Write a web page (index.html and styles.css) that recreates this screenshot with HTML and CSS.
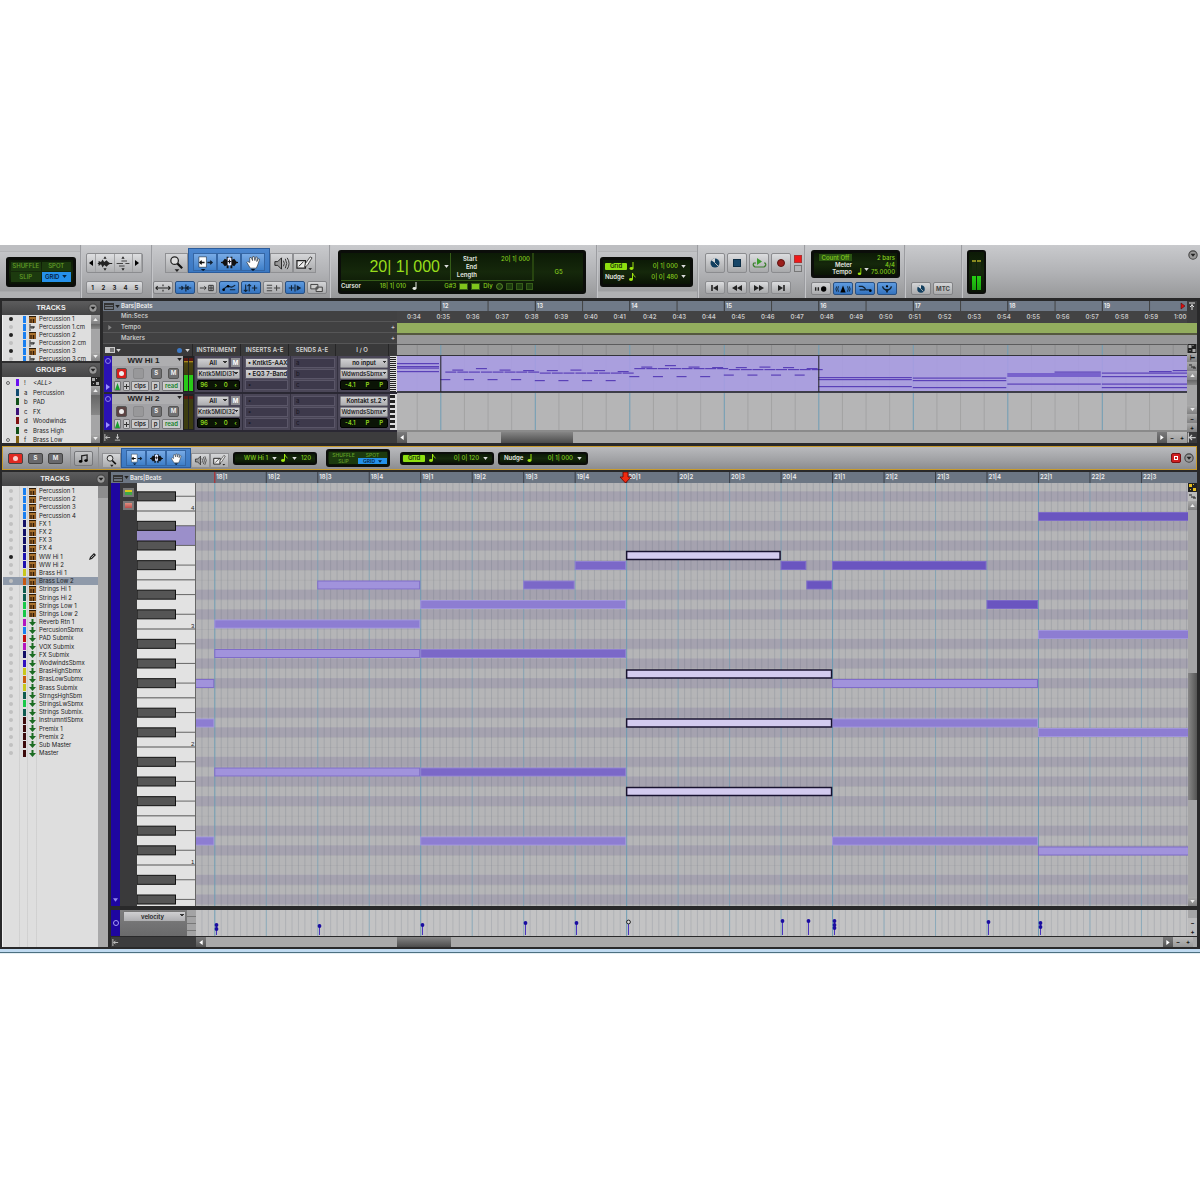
FILE: index.html
```
<!DOCTYPE html>
<html lang="en">
<head>
<meta charset="utf-8">
<title>Edit Window</title>
<link rel="stylesheet" href="styles.css">
</head>
<body>
<svg class="defs" aria-hidden="true">
  <symbol id="caret" viewBox="0 0 6 4"><path d="M0 0h6L3 4z"/></symbol>
  <symbol id="left" viewBox="0 0 4 6"><path d="M4 0v6L0 3z"/></symbol>
  <symbol id="right" viewBox="0 0 4 6"><path d="M0 0v6l4-3z"/></symbol>
  <symbol id="up" viewBox="0 0 6 4"><path d="M0 4h6L3 0z"/></symbol>
  <symbol id="zoom" viewBox="0 0 20 18"><circle cx="8" cy="6" r="4" fill="#ddd" stroke="#222" stroke-width="1.3"/><path d="M11 9l5 5" stroke="#111" stroke-width="2.4"/><path d="M8 15h5l-2.500 3z" fill="#222"/></symbol>
  <symbol id="trim" viewBox="0 0 20 18"><path d="M3 3h8v11H3z" fill="#fff" stroke="#123" stroke-width=".6"/><path d="M4 9h5M6 7L4 9l2 2" fill="none" stroke="#111" stroke-width="1.4"/><path d="M12 9h5M15 7l2 2-2 2" fill="none" stroke="#123" stroke-width="1.4"/><path d="M5 16h5l-2.500 2z" fill="#012"/></symbol>
  <symbol id="selector" viewBox="0 0 20 18"><path d="M1 9h18" stroke="#111" stroke-width="1.300"/><path d="M2 9l3-4 2 1V3h2v12H7v-3l-2 1zM18 9l-3-4-2 1V3h-2v12h2v-3l2 1z" fill="#111"/><path d="M8 4h4v8H8z" fill="#eef"/><path d="M8 8h4M10 6v4" stroke="#111"/></symbol>
  <symbol id="hand" viewBox="0 0 20 18"><path d="M6 14L3 9l1-1 2 1V4l1.500-.5L9 7V3l1.500-.5L11.500 7l1-4 1.500.5L13.500 8l1.500-3 1.500.5-2 6L13 15H7z" fill="#fff" stroke="#333" stroke-width=".7"/><path d="M7 16h5l-2.500 2z" fill="#012"/></symbol>
  <symbol id="speaker" viewBox="0 0 20 18"><path d="M3 7h3l4-4v12l-4-4H3z" fill="#999" stroke="#222"/><path d="M12 6q2 3 0 6M14 4q3 5 0 10M16 3q4 6 0 12" fill="none" stroke="#333"/></symbol>
  <symbol id="pencil" viewBox="0 0 20 18"><path d="M2 6h9v8H2z" fill="#eee" stroke="#222" stroke-width="1.300"/><path d="M4 12l5-5" stroke="#222"/><path d="M10 13l1-4 5-7 2 1-5 8z" fill="#eee" stroke="#222" stroke-width=".8"/><path d="M14 14h4l-2 2z" fill="#222"/></symbol>
  <symbol id="wave" viewBox="0 0 20 18"><path d="M1 9h18" stroke="#222" stroke-width="1.300"/><path d="M2 6l3 1 2-3 2 3 3-2 2 2 3 2-3 2-2 2-3-2-2 3-2-4-3 2z" fill="#222"/><path d="M8 3h4l-2-3zM8 15h4l-2 3z" fill="#222"/></symbol>
  <symbol id="midi" viewBox="0 0 20 18"><path d="M2 9h8M8 6h7M5 12h7M13 9h5" stroke="#444" stroke-width="1.300"/><path d="M8 3h4l-2-3zM8 15h4l-2 3z" fill="#222"/></symbol>
  <symbol id="spread" viewBox="0 0 18 10"><path d="M1 5h16M3 3L1 5l2 2M15 3l2 2-2 2M9 1v2M9 7v2" fill="none" stroke="#222" stroke-width="1.200"/></symbol>
  <symbol id="tabto" viewBox="0 0 18 10"><path d="M2 5h5M5 3l2 2-2 2M10 1v8M8 5h8M12 3v4M11 5l2-2M11 5l2 2" fill="none" stroke="#123" stroke-width="1.300"/></symbol>
  <symbol id="mirror" viewBox="0 0 18 10"><path d="M1 5h7M6 3l2 2-2 2M11 2h5v6h-5zM11 5h5M13.500 2v6" fill="none" stroke="#333" stroke-width="1.100"/></symbol>
  <symbol id="auto" viewBox="0 0 18 10"><path d="M2 7l5-4 5 1 4-2M10 7h6" fill="none" stroke="#123" stroke-width="1.200"/><circle cx="3" cy="7" r="1.500"/><circle cx="8" cy="3" r="1.500"/></symbol>
  <symbol id="updown" viewBox="0 0 18 10"><path d="M3 1v8M1 7l2 2 2-2M7 9V1M5 3l2-2 2 2M13 2v6M10 5h6" fill="none" stroke="#123" stroke-width="1.200"/></symbol>
  <symbol id="layers" viewBox="0 0 18 10"><path d="M2 2h6M2 5h6M2 8h6M10 5h7M13 2v6" stroke="#444" stroke-width="1.200"/></symbol>
  <symbol id="insert" viewBox="0 0 18 10"><path d="M2 5h6M5 2v6M9 1v8" stroke="#123" stroke-width="1.200"/><path d="M11 2v6l5-3z" fill="#123"/></symbol>
  <symbol id="windows" viewBox="0 0 18 10"><path d="M2 1h8v5H2zM8 4h7v5H8z" fill="#ccc" stroke="#333"/></symbol>
  <symbol id="clock" viewBox="0 0 12 12"><circle cx="6" cy="6" r="4.500" fill="#123f5f"/><path d="M6 6V1L2 3z" fill="#d8d8d8"/><path d="M6 6l3 3" stroke="#bbb"/></symbol>
  <symbol id="loop" viewBox="0 0 16 12"><path d="M5 6H3q-2 2 1 4h9q3-2 1-4h-1" fill="none" stroke="#3a7d2c" stroke-width="1.200"/><path d="M6 1v7l5-3.500z" fill="#3a9d2c"/></symbol>
  <symbol id="rtz" viewBox="0 0 12 8"><path d="M3 1v6" stroke="#222" stroke-width="1.600"/><path d="M9 1v6L4 4z"/></symbol>
  <symbol id="rew" viewBox="0 0 12 8"><path d="M6 1v6L1 4zM11 1v6L6 4z"/></symbol>
  <symbol id="ffw" viewBox="0 0 12 8"><path d="M1 1v6l5-3zM6 1v6l5-3z"/></symbol>
  <symbol id="end" viewBox="0 0 12 8"><path d="M9 1v6" stroke="#222" stroke-width="1.600"/><path d="M3 1v6l5-3z"/></symbol>
  <symbol id="wait" viewBox="0 0 18 10"><path d="M3 3v4M6 3v4" stroke="#222" stroke-width="1.600"/><circle cx="12" cy="5" r="3"/></symbol>
  <symbol id="click" viewBox="0 0 18 10"><path d="M9 1l3 8H6z"/><path d="M4 2q-2 3 0 6M2 2q-2 3 0 6M14 2q2 3 0 6M16 2q2 3 0 6" fill="none" stroke="#123"/></symbol>
  <symbol id="merge" viewBox="0 0 18 10"><path d="M2 2h4q3 1 4 4h6M3 6h6" fill="none" stroke="#123" stroke-width="1.400"/><circle cx="15" cy="7" r="1.500"/></symbol>
  <symbol id="tempo" viewBox="0 0 18 10"><path d="M4 2q1 4 5 4t5-4M9 6v3" fill="none" stroke="#123" stroke-width="1.600"/><path d="M6 5h6l-3 4z" fill="#123"/><circle cx="9" cy="2" r="1.300"/></symbol>
  <symbol id="qnote" viewBox="0 0 5 8"><path d="M4 0v6" stroke="currentColor"/><ellipse cx="2.500" cy="6.500" rx="2" ry="1.400" fill="currentColor"/></symbol>
  <symbol id="enote" viewBox="0 0 7 8"><path d="M3.500 6V0q0 2 3 4" fill="none" stroke="currentColor"/><ellipse cx="2" cy="6.500" rx="2" ry="1.400" fill="currentColor"/></symbol>
  <symbol id="notes" viewBox="0 0 12 10"><path d="M4 8V2l6-1v6" fill="none" stroke="#222" stroke-width="1.400"/><ellipse cx="2.800" cy="8.300" rx="2" ry="1.500"/><ellipse cx="8.800" cy="7.300" rx="2" ry="1.500"/></symbol>
  <symbol id="round" viewBox="0 0 12 12"><circle cx="6" cy="6" r="5" fill="#999" stroke="#444" stroke-width="1.300"/><path d="M3 4.500h6L6 8z" fill="#222"/></symbol>
  <symbol id="grid4" viewBox="0 0 9 9"><path d="M0 0h9v9H0z" fill="#222"/><path d="M1 1h3v3H1zM5 5h3v3H5zM5 1h1v1H5zM2 6h1v1H2z" fill="currentColor"/></symbol>
  <symbol id="window" viewBox="0 0 10 8"><path d="M0 1h10v7H0z" fill="#333"/><path d="M1 3h8v1H1zM1 5h8v2H1z" fill="#6b727c"/></symbol>
  <symbol id="zoomv" viewBox="0 0 9 9"><path d="M1 3h3M3 5h4M5 6h3" stroke="#222"/></symbol>
  <symbol id="expand" viewBox="0 0 8 8"><path d="M1 0v8M2 4h5M4 2L2 4l2 2" fill="none" stroke="#ccc"/></symbol>
  <symbol id="drop" viewBox="0 0 8 8"><path d="M1 7h6M4 0v4" stroke="#ccc"/><path d="M2 3h4L4 6z" fill="#ccc"/></symbol>
</svg>

<main class="app">
  <header class="toolbar">
    <section class="group modes">
      <div class="lcd mode-grid">
        <button>SHUFFLE</button><button>SPOT</button><button>SLIP</button>
        <button class="on">GRID<svg class="c"><use href="#caret"/></svg></button>
      </div>
    </section>
    <section class="group presets">
      <div class="seg tall">
        <button aria-label="Zoom out"><svg class="arrow"><use href="#left"/></svg></button><button aria-label="Audio zoom"><svg><use href="#wave"/></svg></button><button aria-label="MIDI zoom"><svg><use href="#midi"/></svg></button><button aria-label="Zoom in"><svg class="arrow"><use href="#right"/></svg></button>
      </div>
      <div class="seg nums"><button>1</button><button>2</button><button>3</button><button>4</button><button>5</button></div>
    </section>
    <section class="group tools">
      <div class="toolrow">
        <button aria-label="Zoomer"><svg><use href="#zoom"/></svg></button>
        <div class="smart"><button aria-label="Trim"><svg><use href="#trim"/></svg></button><button aria-label="Selector"><svg><use href="#selector"/></svg></button><button aria-label="Grabber"><svg><use href="#hand"/></svg></button></div>
        <button aria-label="Scrubber"><svg><use href="#speaker"/></svg></button>
        <button aria-label="Pencil"><svg><use href="#pencil"/></svg></button>
      </div>
      <div class="minis">
        <button aria-label="Zoom toggle"><svg><use href="#spread"/></svg></button><button class="blue" aria-label="Tab to transient"><svg><use href="#tabto"/></svg></button><button aria-label="Mirrored editing"><svg><use href="#mirror"/></svg></button><button class="blue" aria-label="Automation follows edit"><svg><use href="#auto"/></svg></button><button class="blue" aria-label="Link timeline"><svg><use href="#updown"/></svg></button><button aria-label="Link track"><svg><use href="#layers"/></svg></button><button class="blue" aria-label="Insertion follows playback"><svg><use href="#insert"/></svg></button><button aria-label="Layered editing"><svg><use href="#windows"/></svg></button>
      </div>
    </section>
    <section class="group counter">
      <div class="lcd main-lcd">
        <div class="pos"><span class="big">20| 1| 000</span><svg class="c"><use href="#caret"/></svg></div>
        <dl class="range"><dt>Start</dt><dd>20| 1| 000</dd><dt>End</dt><dd></dd><dt>Length</dt><dd></dd></dl>
        <div class="pitch">G5</div>
        <div class="cursor"><b>Cursor</b><span>18| 1| 010</span><svg class="qn"><use href="#qnote"/></svg><span class="gs">G#3</span><i class="chip on"></i><i class="chip on"></i><span>Dly</span><i class="chip ring2"></i><i class="chip"></i><i class="chip"></i><i class="chip"></i></div>
      </div>
    </section>
    <section class="group modes">
      <div class="lcd gn">
        <button class="lit">Grid</button><svg class="qn"><use href="#qnote"/></svg><span>0| 1| 000</span><svg class="c"><use href="#caret"/></svg>
        <b>Nudge</b><svg class="en"><use href="#enote"/></svg><span>0| 0| 480</span><svg class="c"><use href="#caret"/></svg>
      </div>
    </section>
    <section class="group transport">
      <div class="trow big-row">
        <button aria-label="Online"><svg><use href="#clock"/></svg></button><button aria-label="Stop"><i class="stop"></i></button><button aria-label="Play"><svg class="loop"><use href="#loop"/></svg></button><button aria-label="Record"><i class="rec"></i></button>
        <div class="leds"><i class="led red"></i><i class="led"></i></div>
      </div>
      <div class="trow">
        <button aria-label="Return to zero"><svg><use href="#rtz"/></svg></button><button aria-label="Rewind"><svg><use href="#rew"/></svg></button><button aria-label="Fast forward"><svg><use href="#ffw"/></svg></button><button aria-label="Go to end"><svg><use href="#end"/></svg></button>
      </div>
    </section>
    <section class="group tempo">
      <div class="lcd tempo-lcd">
        <span class="boxed">Count Off</span><span>2 bars</span>
        <b>Meter</b><span>4/4</span>
        <b>Tempo</b><span><svg class="qn"><use href="#qnote"/></svg><svg class="c"><use href="#caret"/></svg>75.0000</span>
      </div>
      <div class="minis">
        <button aria-label="Wait for note"><svg><use href="#wait"/></svg></button><button class="blue" aria-label="Metronome"><svg><use href="#click"/></svg></button><button class="blue" aria-label="MIDI merge"><svg><use href="#merge"/></svg></button><button class="blue" aria-label="Conductor"><svg><use href="#tempo"/></svg></button>
      </div>
    </section>
    <section class="group sync"><div class="minis"><button aria-label="Sync"><svg><use href="#clock"/></svg></button><button>MTC</button></div></section>
    <section class="group master">
      <div class="lcd vu"><i></i><i></i></div>
      <button class="menu" aria-label="Menu"><svg><use href="#round"/></svg></button>
    </section>
  </header>

  <section class="edit">
    <aside class="side">
      <h2>TRACKS<svg><use href="#round"/></svg></h2>
      <div class="listbox top-list"><ul class="tracks" id="shown"></ul><div class="vbar"><button aria-label="Scroll up"><svg><use href="#up"/></svg></button><i></i><span></span><button aria-label="Scroll down"><svg><use href="#caret"/></svg></button></div></div>
      <h2 class="second">GROUPS<svg><use href="#round"/></svg></h2>
      <div class="listbox group-list"><ul class="groups" id="groups"></ul><div class="vbar"><svg class="g4"><use href="#grid4"/></svg><button aria-label="Scroll up"><svg><use href="#up"/></svg></button><i class="long"></i><span></span><button aria-label="Scroll down"><svg><use href="#caret"/></svg></button></div></div>
    </aside>
    <div class="arrange">
      <div class="ruler-names">
        <div class="bars"><svg class="win"><use href="#window"/></svg><svg class="c"><use href="#caret"/></svg>Bars|Beats</div>
        <div>Min:Secs</div><div><svg class="tri"><use href="#right"/></svg>Tempo<em>+</em></div><div>Markers<em>+</em></div>
      </div>
      <svg class="rulers" id="rulers"></svg>
      <div class="heads">
        <div class="cols"><span class="pick"><i></i><svg class="c"><use href="#caret"/></svg><b></b><svg class="c"><use href="#caret"/></svg></span><span>INSTRUMENT</span><span>INSERTS A-E</span><span>SENDS A-E</span><span>I / O</span></div>
        <div id="heads"></div>
      </div>
      <svg class="lanes" id="lanes"></svg>
      <div class="vbar zoomer"><svg class="g4"><use href="#grid4"/></svg><button>⊢</button><button aria-label="Note zoom"><svg class="g4"><use href="#zoomv"/></svg></button><button aria-label="Scroll up"><svg><use href="#up"/></svg></button><i></i><span></span><button aria-label="Scroll down"><svg><use href="#caret"/></svg></button><button>−</button><button>+</button></div>
      <div class="foot"><svg><use href="#expand"/></svg><svg><use href="#drop"/></svg></div>
      <div class="hbar"><button aria-label="Scroll left"><svg><use href="#left"/></svg></button><span class="pre"></span><i></i><span></span><button aria-label="Scroll right"><svg><use href="#right"/></svg></button><button class="lt">−</button><button class="lt">+</button><svg class="last"><use href="#expand"/></svg></div>
    </div>
  </section>

  <section class="midi">
    <header class="midibar">
      <div class="rsm"><button class="r" aria-label="Record"><i></i></button><button>S</button><button>M</button></div>
      <div class="noteb"><button aria-label="Notation"><svg><use href="#notes"/></svg></button></div>
      <div class="toolrow small">
        <button aria-label="Zoomer"><svg><use href="#zoom"/></svg></button>
        <div class="smart"><button aria-label="Trim"><svg><use href="#trim"/></svg></button><button aria-label="Selector"><svg><use href="#selector"/></svg></button><button aria-label="Grabber"><svg><use href="#hand"/></svg></button></div>
        <button aria-label="Scrubber"><svg><use href="#speaker"/></svg></button>
        <button aria-label="Pencil"><svg><use href="#pencil"/></svg></button>
      </div>
      <div class="lcd line w83"><span>WW Hi 1</span><svg class="c"><use href="#caret"/></svg><svg class="en"><use href="#enote"/></svg><svg class="c"><use href="#caret"/></svg><span>120</span></div>
      <div class="lcd mode-grid small"><button>SHUFFLE</button><button>SPOT</button><button>SLIP</button><button class="on">GRID<svg class="c"><use href="#caret"/></svg></button></div>
      <div class="lcd line w93"><button class="lit">Grid</button><svg class="en"><use href="#enote"/></svg><span class="grow">0| 0| 120</span><svg class="c"><use href="#caret"/></svg></div>
      <div class="lcd line w90"><b>Nudge</b><svg class="qn"><use href="#qnote"/></svg><span class="grow">0| 1| 000</span><svg class="c"><use href="#caret"/></svg></div>
      <div class="ends"><button class="target" aria-label="Link"><i></i></button><button class="menu" aria-label="Menu"><svg><use href="#round"/></svg></button></div>
    </header>
    <div class="editor">
      <aside class="side">
        <h2>TRACKS<svg><use href="#round"/></svg></h2>
        <div class="listbox full"><ul class="tracks" id="all"></ul><div class="vbar plain"></div></div>
      </aside>
      <div class="roll">
        <div class="roll-name"><svg class="win"><use href="#window"/></svg><svg class="c"><use href="#caret"/></svg>Bars|Beats</div>
        <svg class="beats" id="beats"></svg>
        <div class="strip"><svg><use href="#caret"/></svg></div>
        <div class="chips"><i class="a"></i><i class="b"></i></div>
        <svg class="keys" id="keys"></svg>
        <svg class="notes" id="notesview"></svg>
        <div class="vbar rollbar"><svg class="g4 gold"><use href="#grid4"/></svg><button class="lt" aria-label="Note zoom"><svg class="g4"><use href="#zoomv"/></svg></button><button aria-label="Scroll up"><svg><use href="#up"/></svg></button><span class="pre"></span><i></i><span></span><button aria-label="Scroll down"><svg><use href="#caret"/></svg></button></div>
        <div class="strip vel"><i></i></div>
        <div class="velname"><select aria-label="Lane"><option>velocity</option></select></div>
        <div class="ticks"></div>
        <svg class="velocity" id="velocity"></svg>
        <div class="vbar velbar"><span></span><button>−</button><button>+</button></div>
        <div class="foot"><svg><use href="#expand"/></svg></div>
        <div class="hbar"><button aria-label="Scroll left"><svg><use href="#left"/></svg></button><span class="pre"></span><i></i><span></span><button aria-label="Scroll right"><svg><use href="#right"/></svg></button><button class="lt">−</button><button class="lt">+</button></div>
      </div>
    </div>
  </section>
  <div class="frame"></div>
</main>
<script src="app.js"></script>
</body>
</html>
```
FILE: styles.css
```
* { box-sizing: border-box; }
body { margin: 0; background: #fff; font: 6px/8px Inter, "Liberation Sans", sans-serif; color: #222; }
button, select { font: inherit; color: inherit; border: 0; padding: 0; margin: 0; background: none; }
button { display: flex; align-items: center; justify-content: center; }
ul, dl, dd, h2 { margin: 0; padding: 0; list-style: none; }
svg { display: block; flex: none; }
.defs { position: absolute; width: 0; height: 0; }
.app { padding: 245px 0; overflow: hidden; }
.c { width: 5px; height: 3px; fill: currentColor; }
.qn { width: 5px; height: 8px; }
.en { width: 7px; height: 8px; }

/* main toolbar */
.toolbar { display: grid; grid-template-columns: 81px 71px 178px 267px 101px 107px 100px 57px 1fr; height: 53px; background: linear-gradient(#c9cacd, #b2b3b6 50%, #97989a); }
.group { border-left: 1px solid #c4c5c8; border-right: 1px solid #9b9ca0; }
.group:first-child { border-left: 0; padding-left: 6px; }
.lcd { background: linear-gradient(#0c1a06, #15280b 50%, #0a1405); border: 3px solid #0b0d0a; border-radius: 3px; color: #86cf1e; font-weight: 500; }
.lcd b { color: #e4e8e0; font-weight: 600; }
.lcd .c { color: #ddd; }
.lcd .qn, .lcd .en { color: #9ee60f; }
.modes { padding: 6px 3px 6px 5px; background: linear-gradient(#bdbec1 6px, #a2a3a5 6px, transparent 7px, transparent 46px, #a0a1a3 46px, #b0b1b3 47px); display: flex; align-items: center; }
.mode-grid { display: grid; grid-template-columns: 1fr 1fr; gap: 1px; width: 70px; height: 30px; padding: 2px; }
.mode-grid button { background: #1c3a0e; color: #64a028; gap: 3px; }
.mode-grid .on { background: #2591ea; color: #06233f; font-weight: 600; }
.mode-grid .on .c { color: #06233f; }
.presets { padding: 8px 7px 4px 4px; display: flex; flex-direction: column; justify-content: space-between; }
.seg { display: flex; width: 57px; height: 13px; border: 1px solid #8b8c8f; border-radius: 2px; background: linear-gradient(#dedfe1, #aeafb1); }
.seg button { flex: 1; font-weight: 700; }
.seg.tall { height: 20px; }
.seg.tall button { flex: 0 0 9px; border-right: 1px solid #a2a3a5; }
.seg.tall button:nth-child(2), .seg.tall button:nth-child(3) { flex: 1; }
.seg svg { width: 16px; height: 15px; }
.seg .arrow { width: 4px; height: 6px; }
.tools { padding: 3px 0 4px; display: flex; flex-direction: column; justify-content: space-between; }
.toolrow { display: flex; align-items: flex-end; height: 25px; padding-left: 12px; }
.toolrow button { width: 23px; height: 20px; background: linear-gradient(#d6d7d9, #a9aaac); border: 1px solid #8f9093; }
.toolrow svg { width: 19px; height: 17px; }
.smart { display: flex; align-items: flex-end; height: 25px; padding: 0 4px 1px; background: linear-gradient(#4b86cf, #3a78c2); border: 1px solid #2b5c9c; }
.toolrow .smart button { width: 24px; height: 18px; background: linear-gradient(#79abe6, #3e7fc9); border: 1px solid #3566a4; }
.minis { display: flex; gap: 2px; }
.minis button { width: 20px; height: 13px; border: 1px solid #828386; border-radius: 2px; background: linear-gradient(#d4d5d7, #aaabad); color: #444; font-weight: 700; }
.minis .blue { background: linear-gradient(#5e9be0, #3473bf); border-color: #274f82; }
.minis svg { width: 16px; height: 10px; }
.counter { padding: 5px 10px 4px 7px; }
.main-lcd { display: grid; grid-template-columns: 110px 83px 1fr; grid-template-rows: 1fr 11px; height: 44px; white-space: nowrap; }
.pos { display: flex; align-items: center; justify-content: flex-end; gap: 4px; padding: 0 1px; border-right: 1px solid #355c18; }
.big { font: 16px/24px "Liberation Sans", sans-serif; color: #98de1b; }
.range { display: grid; grid-template-columns: 24px 1fr; align-content: center; padding: 0 2px; text-align: right; border-right: 2px solid #27440f; }
.range dt { color: #e4e8e0; font-weight: 600; }
.pitch { grid-row: 1 / 3; grid-column: 3; display: grid; place-items: center; }
.cursor { grid-column: 1 / 3; grid-row: 2; display: flex; align-items: center; gap: 3px; border-top: 1px solid #355c18; }
.cursor span:nth-of-type(1) { margin-left: 16px; }
.cursor .qn { color: #e4e8e0; margin-left: 3px; }
.gs { margin-left: 24px; }
.chip { width: 7px; height: 7px; flex: none; border: 1px solid #355c18; background: #1c3a0e; }
.chip.on { background: #7fc61c; width: 9px; }
.chip.ring2 { border-radius: 50%; border-color: #5a8a2a; }
.gn { display: grid; grid-template-columns: 24px 8px 1fr 7px; align-items: center; row-gap: 1px; width: 93px; height: 30px; padding: 2px; margin-left: -3px; }
.gn span { text-align: right; padding-right: 3px; }
.lit { background: #8ee010; color: #17300a; border-radius: 1px; width: 22px; height: 7px; font-weight: 600; }
.transport, .tempo { display: flex; flex-direction: column; justify-content: space-between; padding: 8px 0 4px 6px; }
.trow { display: flex; gap: 2px; }
.trow button { width: 20px; height: 13px; border: 1px solid #8b8c8f; border-radius: 2px; background: linear-gradient(#dcdddf, #a8a9ab); }
.trow svg { width: 12px; height: 8px; fill: #222; }
.big-row button { height: 20px; }
.big-row svg { width: 12px; height: 12px; }
.big-row .loop { width: 16px; }
.stop { width: 8px; height: 8px; background: #174668; border: 1px solid #0c2d45; }
.rec { width: 8px; height: 8px; border-radius: 50%; background: #9c1f1c; border: 1px solid #5e1512; }
.leds { display: grid; gap: 2px; align-content: center; margin-left: 1px; }
.led { width: 8px; height: 7px; border: 1px solid #777; background: #b4b5b7; }
.led.red { background: #f01818; height: 8px; border-color: #a33; }
.tempo { padding: 5px 4px 3px 5px; }
.tempo-lcd { display: grid; grid-template-columns: 36px 1fr; width: 89px; height: 28px; padding: 0 2px; line-height: 7px; text-align: right; align-content: center; }
.tempo-lcd span { display: flex; justify-content: flex-end; gap: 2px; }
.tempo-lcd .qn { height: 7px; }
.tempo-lcd .boxed { background: #2a5413; justify-content: center; margin-left: 3px; }
.sync { display: flex; align-items: flex-end; padding: 0 5px 3px; }
.master { display: flex; justify-content: space-between; border-right: 0; padding: 5px 2px 3px 4px; }
.vu { width: 19px; height: 44px; display: flex; gap: 1px; align-items: flex-end; justify-content: center; padding: 2px; border-width: 2px; }
.vu i { width: 4px; height: 30px; background: linear-gradient(#8a8a20 2px, #1b2b10 2px, #16240e 16px, #23d012 16px, #1aa00f); }
.menu { width: 10px; height: 10px; }
.menu svg { width: 10px; height: 10px; }

/* side lists */
.side { display: flex; flex-direction: column; background: #2d2d2e; min-width: 0; }
.side h2 { height: 14px; flex: none; font: 700 7px/14px "Liberation Sans", sans-serif; color: #eee; text-align: center; background: linear-gradient(#5c5c5d, #454546); position: relative; }
.side h2 svg { position: absolute; right: 2px; top: 2px; width: 10px; height: 10px; }
.side .second { margin-top: 2px; }
.listbox { display: flex; overflow: hidden; background: #dedede; border-left: 1px solid #f2f2f2; }
.listbox ul { flex: 1; min-width: 0; overflow: hidden; }
.tracks li { display: grid; grid-template-columns: 16px 10px 10px 1fr; align-items: center; height: 8px; white-space: nowrap; }
.dot { width: 4px; height: 4px; border-radius: 50%; background: #c0c0c0; margin-left: 6px; }
.dot.on { background: #222; }
.tag { width: 3px; height: 7px; margin-left: 4px; }
.kind { width: 7px; height: 7px; }
.top-list { height: 46px; }
.group-list { height: 66px; }
.groups li { display: grid; grid-template-columns: 13px 8px 9px 1fr; height: 9px; line-height: 9px; align-items: center; white-space: nowrap; }
.groups { padding-top: 1px; }
.groups li:nth-child(2n) { height: 10px; }
.groups .tag { margin-left: 0; }
.ring { width: 4px; height: 4px; border: 1px solid #666; border-radius: 50%; margin-left: 3px; }
.ring.off { visibility: hidden; }
.full { flex: 1; }
.full ul { padding-top: 1px; background: linear-gradient(90deg, transparent 16px, #cfcfcf 16px, #d2d2d2 17px, transparent 17px, transparent 24px, #cfcfcf 24px, #d2d2d2 25px, transparent 25px, transparent 33px, #cfcfcf 33px, #d2d2d2 34px, transparent 34px); }
.full .stack { display: flex; flex-direction: column; height: 270px; }
.full li { flex: 1; height: auto; }
.full li.sel { background: #8f9aaa; }
.full .pen { display: flex; justify-content: space-between; align-items: center; padding-right: 2px; }
.pen svg { width: 8px; height: 8px; }

/* scrollbars */
.vbar { display: flex; flex-direction: column; width: 9px; background: #a5a5a6; flex: none; }
.vbar button, .vbar .g4 { width: 100%; height: 9px; }
.vbar button { background: linear-gradient(#aaa, #808081); color: #111; font-weight: 700; }
.vbar button svg { width: 5px; height: 3px; fill: #eee; }
.vbar button .g4 { width: 9px; height: 9px; }
.vbar .g4 { color: #aaa; }
.vbar span { flex: 1; }
.vbar i { height: 5px; background: linear-gradient(#666, #888); }
.vbar .long { height: 20px; }
.vbar.plain { width: 10px; background: linear-gradient(#8d8d8e 12px, #a9a9aa 12px); }
.hbar { display: flex; height: 10px; background: #a9a9a9; align-items: stretch; }
.hbar button { width: 10px; background: linear-gradient(#7a7a7b, #555); color: #111; font-weight: 700; }
.hbar button svg { width: 4px; height: 5px; fill: #fff; }
.hbar .lt { background: linear-gradient(#bbb, #999); }
.hbar span { flex: 1; }
.hbar i { background: linear-gradient(#858585, #4c4c4c); }
.hbar .last { width: 10px; height: 11px; background: #3b3b3c; }
.foot { display: flex; gap: 3px; align-items: center; background: #3c3c3d; padding-left: 1px; }
.foot svg { width: 7px; height: 7px; }

/* edit window */
.edit { display: grid; grid-template-columns: 98px 1fr; gap: 3px; padding: 3px 3px 3px 2px; background: #29292a; }
.arrange { display: grid; grid-template-columns: 294px 1fr 10px; grid-template-rows: 43px 88px 11px; min-width: 0; background: #3c3c3d; }
.ruler-names { display: grid; grid-template-rows: 10px 11px 11px 11px; color: #c8c8c8; font-weight: 600; }
.ruler-names div { display: flex; align-items: center; padding-left: 18px; background: #414142; border-bottom: 1px solid #565657; }
.ruler-names .bars { background: #707a88; color: #eee; padding-left: 1px; gap: 1px; border-bottom: 0; }
.ruler-names .c, .roll-name .c { fill: #222; }
.win { width: 10px; height: 8px; }
.ruler-names em { margin-left: auto; padding-right: 2px; font-style: normal; }
.tri { width: 4px; height: 5px; fill: #888; margin: 0 9px 0 -13px; }
.rulers { width: 100%; height: 43px; grid-column: 2 / 4; }
.lanes { width: 100%; height: 88px; }
.arrange .foot { grid-column: 1; }
.arrange .hbar { grid-column: 2 / 4; height: 11px; }
.arrange .hbar .pre { flex: 0 0 94px; }
.arrange .hbar i { width: 72px; }
.zoomer { width: 10px; }
.zoomer .g4 { flex: none; }
.heads { display: grid; grid-template-rows: 12px 76px; }
.cols { display: grid; grid-template-columns: 90px 48px 48px 47px 53px; background: #3a3a3b; color: #d4d4d4; font-weight: 600; line-height: 12px; text-align: center; }
.cols span { border-right: 1px solid #262627; white-space: nowrap; }
.pick { display: flex; align-items: center; gap: 1px; padding: 0 2px; }
.pick i { width: 10px; height: 6px; border: 1px solid #ccc; border-left-width: 5px; background: #777; }
.pick b { width: 5px; height: 5px; border-radius: 50%; background: #3c78c4; margin: 0 2px 0 auto; }
.head { display: grid; grid-template-columns: 8px 71px 11px 48px 48px 47px 53px 1fr; height: 38px; background: #4a4657; margin-left: 1px; border-bottom: 2px solid #2a2833; }
.hue { background: #2a12b4; color: #9d90ff; display: flex; flex-direction: column; justify-content: space-between; align-items: center; padding: 2px 0; }
.hue svg { width: 4px; height: 6px; fill: currentColor; }
.hue i { width: 6px; height: 6px; border-radius: 50%; border: 1px solid #8c80e8; }
.name { background: #a2a2a5; display: grid; grid-template-rows: 10px 14px 12px; }
.name strong { font: 700 8px/10px "Liberation Sans", sans-serif; background: #aeaeb0; text-align: center; position: relative; padding-right: 8px; }
.name strong svg { position: absolute; right: 1px; top: 2px; }
.name div { display: flex; align-items: center; justify-content: space-between; padding: 0 4px; }
.name div:last-child { padding: 0 2px; }
.sq { width: 11px; height: 11px; border: 1px solid #555; border-radius: 2px; background: #707072; color: #eee; font-weight: 700; }
.sq i { width: 5px; height: 5px; border-radius: 50%; background: #eee; }
.sq.red { background: #d8201c; }
.sq.arm { background: #5c4444; }
.sq.blank { background: #98989a; border-color: #8a8a8c; }
.tiny { height: 10px; padding: 0 2px; background: #cacacc; border: 1px solid #77777a; border-radius: 1px; font-weight: 600; }
.tiny.ico { padding: 0 1px; width: 7px; }
.tiny svg { width: 5px; height: 7px; }
.tiny.green { color: #15822a; }
.mtr { background: #222; display: flex; gap: 1px; padding: 2px 1px 1px; }
.mtr i { flex: 1; background: linear-gradient(#5a1a14 3px, #3d3d10 3px); }
.hot .mtr i { background: linear-gradient(#5a1a14 3px, #c8a020 3px, #4c4410 5px, #3d3d10 17px, #28c818 17px); }
.slots { display: grid; grid-template-rows: 10px 10px 10px; gap: 1px; padding: 2px 2px 0; border-left: 1px solid #33303f; }
.slots > div { display: flex; gap: 2px; min-width: 0; }
.slots .box { flex: 1; min-width: 0; background: #3d394b; border: 1px solid #5a5668; color: #191722; padding-left: 2px; line-height: 8px; justify-content: flex-start; }
.slots .full-slot { background: linear-gradient(#d4d4d6, #b4b4b7); color: #111; font-weight: 600; white-space: nowrap; }
select { background: conic-gradient(from 315deg at 50% 100%, #333 90deg, transparent 0) right 1px top 2px / 4px 2px no-repeat, linear-gradient(#d0d0d2, #aeaeb1); appearance: none; }
.slots select { flex: 1; min-width: 0; width: 100%; height: 10px; border: 1px solid #85858a; border-radius: 1px; color: #111; font-weight: 600; text-align: center; line-height: 8px; }
.slots .port { font-weight: 500; padding-right: 4px; }
.slots .m { width: 9px; height: 9px; background: #8e8e92; color: #fff; font-weight: 700; }
.slots .num { flex: 1; display: flex; justify-content: space-around; align-items: center; background: #0b1406; color: #8fd61d; border: 1px solid #000; border-radius: 2px; font-weight: 600; }

/* MIDI editor */
.midi { background: #29292a; padding: 0 3px 2px 2px; }
.midibar { display: flex; align-items: center; height: 24px; border: 1px solid #c79a2c; background: linear-gradient(#b9babd, #a4a5a8 50%, #8c8d90); }
.rsm { display: flex; gap: 5px; padding: 0 7px 0 5px; align-self: stretch; align-items: center; border-right: 1px solid #8d8e90; }
.rsm button { width: 15px; height: 11px; border: 1px solid #444; border-radius: 2px; background: #69696c; color: #eee; font-weight: 700; }
.rsm .r { background: #e02a22; }
.rsm i { width: 5px; height: 5px; border-radius: 50%; background: #f8d0cc; }
.noteb { padding: 0 5px 0 3px; align-self: stretch; display: flex; align-items: center; border-right: 1px solid #8d8e90; }
.noteb button { width: 19px; height: 15px; border: 1px solid #77787b; border-radius: 2px; background: linear-gradient(#c6c7c9, #9c9d9f); }
.noteb svg { width: 11px; height: 9px; }
.small.toolrow { height: 20px; padding-left: 3px; margin-right: 4px; }
.small.toolrow button { width: 19px; height: 15px; }
.small .smart { height: 20px; }
.small.toolrow .smart button { width: 20px; height: 16px; }
.small svg { width: 15px; height: 13px; }
.line { display: flex; align-items: center; gap: 4px; height: 13px; border-width: 2px; padding: 0 4px; white-space: nowrap; }
.line span:first-child { margin-left: auto; }
.grow { flex: 1; text-align: right; }
.w83 { width: 84px; margin-right: 9px; }
.w93 { width: 94px; margin-right: 4px; padding-left: 1px; }
.w90 { width: 90px; }
.mode-grid.small { width: 64px; height: 18px; padding: 1px; gap: 0; border-width: 2px; line-height: 6px; margin-right: 10px; font-size: 5px; }
.mode-grid.small .c { width: 4px; height: 3px; }
.ends { margin-left: auto; display: flex; gap: 3px; padding-right: 2px; }
.target { width: 10px; height: 10px; background: #d01d20; border: 1px solid #7a1012; border-radius: 2px; }
.target i { width: 4px; height: 4px; border: 1px solid #fff; }
.editor { display: grid; grid-template-columns: 106px 1fr; gap: 3px; padding-top: 2px; }
.roll { display: grid; grid-template-columns: 9px 17px 50px 9px 1fr 9px; grid-template-rows: 11px 423px 4px 26px 1px 10px; min-width: 0; }
.roll-name { grid-area: 1 / 1 / 2 / 5; background: #6c7683; color: #eee; font-weight: 600; display: flex; align-items: center; gap: 1px; padding-left: 2px; }
.beats { grid-area: 1 / 5 / 2 / 7; width: 100%; height: 11px; z-index: 1; }
.strip { grid-area: 2 / 1; background: #1e06a0; display: flex; align-items: flex-end; justify-content: center; padding-bottom: 4px; }
.strip svg { width: 5px; height: 4px; fill: #9486f0; }
.chips { grid-area: 2 / 2; background: #3a3a3b; padding: 5px 3px; }
.chips i { display: block; width: 11px; height: 9px; border: 2px solid #777; margin-bottom: 4px; }
.chips .a { background: linear-gradient(#d8c71c 2px, #40a848 2px); }
.chips .b { background: linear-gradient(#e09080, #b84c4c); }
.keys { grid-area: 2 / 3 / 3 / 5; width: 59px; height: 423px; background: #e2e2e2; }
.notes { grid-area: 2 / 5; width: 100%; height: 423px; background: #b5b5b7; }
.rollbar { grid-area: 2 / 6; }
.rollbar .pre { flex: 0 0 163px; }
.rollbar i { height: 127px; background: linear-gradient(90deg, #888, #555); }
.vbar .gold { color: #e8c020; }
.vbar .lt { background: #bbb; }
.strip.vel { grid-area: 4 / 1; align-items: center; padding: 0; }
.vel i { width: 6px; height: 6px; border: 1px solid #a79df5; border-radius: 50%; }
.velname { grid-area: 4 / 2 / 5 / 4; background: linear-gradient(#7e7e7f, #6a6a6b); padding: 1px 3px; }
.velname select { width: 63px; height: 11px; border: 1px solid #777; border-radius: 1px; padding-right: 4px; font-weight: 600; text-align: center; line-height: 9px; }
.ticks { grid-area: 4 / 4; background: repeating-linear-gradient(#a3a3a4, #a3a3a4 6px, #777 6px, #777 7px); }
.velocity { grid-area: 4 / 5; width: 100%; height: 26px; background: #c3c3c4; }
.velbar { grid-area: 4 / 6; }
.velbar button { background: #bcbcbd; height: 9px; }
.roll .foot { grid-area: 6 / 1 / 7 / 5; }
.roll .hbar { grid-area: 6 / 5 / 7 / 7; padding-right: 4px; }
.roll .hbar .pre { flex: 0 0 191px; }
.roll .hbar i { width: 54px; }
.frame { height: 5px; background: linear-gradient(#c0daf0 3px, #4d7080 3px, #4d7080 4px, #e4eef4 4px); }

/* timeline drawing */
svg text { font: 600 6px Inter, sans-serif; fill: #eee; }
svg .dim { fill: #c8c8c8; }
svg .oct { font: 500 6px "Liberation Sans", sans-serif; fill: #222; }
```
FILE: app.js
```
const NS = 'http://www.w3.org/2000/svg';
const $ = id => document.getElementById(id);
function add(parent, tag, attrs, text) {
  const el = document.createElementNS(NS, tag);
  for (const k in attrs) el.setAttribute(k, attrs[k]);
  if (text !== undefined) el.textContent = text;
  parent.appendChild(el);
  return el;
}
const rect = (p, x, y, width, height, fill, more) => add(p, 'rect', { x, y, width, height, fill, ...more });

/* track and group lists */
const kinds = {
  inst: '<svg class="kind" viewBox="0 0 7 7"><path d="M0 0h7v7H0z" fill="#8f5a22"/><path d="M1 1h5v2H1z" fill="#a8722f"/><path d="M2 3v4M4.500 3v4M0 .5h7" stroke="#2b1a08"/></svg>',
  aux: '<svg class="kind" viewBox="0 0 7 7"><path d="M2.500 0h2v3H7L3.500 7 0 3h2.500z" fill="#1b6b22"/></svg>',
  clip: '<svg class="kind" viewBox="0 0 7 7"><path d="M1 0v7M1 3h5M3 2v3M4.500 2.500v2" stroke="#333"/></svg>'
};
function trackRow([name, color, kind, on, sel, pen]) {
  const icon = '<svg viewBox="0 0 8 8"><path d="M1 7l1-3 4-4 2 2-4 4z" fill="#222"/><path d="M3 5l3-3" stroke="#ddd" stroke-width=".7"/></svg>';
  return `<li class="${sel ? 'sel' : ''}"><i class="dot ${on ? 'on' : ''}"></i><i class="tag" style="background:${color}"></i>${kinds[kind]}<span class="${pen ? 'pen' : ''}">${name}${pen ? icon : ''}</span></li>`;
}
const B = '#1a7ff0', N = '#120f66', P = '#b414c0', Y = '#c8c81c', O = '#c85a10', T = '#0e5c50', G = '#18c848', K = '#3c0a0a';
$('shown').innerHTML = [['Percussion 1', B, 'inst', 1], ['Percussion 1.cm', B, 'clip'], ['Percussion 2', B, 'inst', 1], ['Percussion 2.cm', B, 'clip'], ['Percussion 3', B, 'inst', 1], ['Percussion 3.cm', B, 'clip']].map(trackRow).join('');
const all = [
  ['Percussion 1', B, 'inst'], ['Percussion 2', B, 'inst'], ['Percussion 3', B, 'inst'], ['Percussion 4', B, 'inst'],
  ['FX 1', N, 'inst'], ['FX 2', N, 'inst'], ['FX 3', N, 'inst'], ['FX 4', N, 'inst'],
  ['WW Hi 1', '#1c10b0', 'inst', 1, 0, 1], ['WW Hi 2', '#1c10b0', 'inst'], ['Brass Hi 1', Y, 'inst'], ['Brass Low 2', O, 'inst', 0, 1],
  ['Strings Hi 1', T, 'inst'], ['Strings Hi 2', T, 'inst'], ['Strings Low 1', G, 'inst'], ['Strings Low 2', G, 'inst'],
  ['Reverb Rtn 1', P, 'aux'], ['PercusionSbmx', B, 'aux'], ['PAD Submix', '#c01010', 'aux'], ['VOX Submix', P, 'aux'], ['FX Submix', N, 'aux'],
  ['WodwindsSbmx', '#3010c0', 'aux'], ['BrasHighSbmx', Y, 'aux'], ['BrasLowSubmx', O, 'aux'], ['Brass Submix', Y, 'aux'], ['StrngsHghSbm', T, 'aux'],
  ['StringsLwSbmx', G, 'aux'], ['Strings Submix.', T, 'aux'], ['InstrumntlSbmx', K, 'aux'], ['Premix 1', K, 'aux'], ['Premix 2', K, 'aux'], ['Sub Master', K, 'aux'], ['Master', K, 'aux']
];
$('all').innerHTML = `<div class="stack">${all.map(trackRow).join('')}</div>`;
$('groups').innerHTML = [['!', '<em>&lt;ALL&gt;</em>', '#6a10f0', 1], ['a', 'Percussion', '#104a70'], ['b', 'PAD', '#105018'], ['c', 'FX', '#3c1078'], ['d', 'Woodwinds', '#801010'], ['e', 'Brass High', '#105018'], ['f', 'Brass Low', '#806010', 1]]
  .map(([k, n, c, on]) => `<li><i class="ring ${on ? '' : 'off'}"></i><i class="tag" style="background:${c}"></i><span>${k}</span><span>${n}</span></li>`).join('');

/* channel heads */
const caret = '<svg class="c"><use href="#caret"/></svg>';
$('heads').innerHTML = [['WW Hi 1', 'Kntk5MIDI31', ['Kntkt5-AAX', 'EQ3 7-Band', ''], 'no input', 1], ['WW Hi 2', 'Kntk5MIDI32', ['', '', ''], 'Kontakt st.2', 0]]
  .map(([name, port, ins, input, hot]) => `<div class="head ${hot ? 'hot' : ''}">
  <div class="hue"><i></i><svg><use href="#right"/></svg></div>
  <div class="name"><strong>${name}${caret}</strong>
    <div><button class="sq ${hot ? 'red' : 'arm'}" aria-label="Record enable"><i></i></button><button class="sq blank" aria-label="Input"></button><button class="sq">S</button><button class="sq">M</button></div>
    <div><button class="tiny ico" aria-label="Timebase"><svg viewBox="0 0 5 7"><path d="M2.500 0L5 7H0z" fill="#18a030"/></svg></button><button class="tiny ico" aria-label="Elastic"><svg viewBox="0 0 5 7"><path d="M2.500 1v5M0 3.500h5" stroke="#333"/></svg></button><button class="tiny">clps</button><button class="tiny">p</button><button class="tiny green">read</button></div></div>
  <div class="mtr"><i></i><i></i></div>
  <div class="slots"><div><select aria-label="Channel"><option>All</option></select><button class="m">M</button></div><div><select class="port" aria-label="Port"><option>${port}</option></select></div><div class="num"><span>96</span><span>›</span><span>0</span><span>‹</span></div></div>
  <div class="slots">${ins.map(t => `<div><button class="box ${t ? 'full-slot' : ''}">• ${t}</button></div>`).join('')}</div>
  <div class="slots">${['a', 'b', 'c'].map(t => `<div><button class="box">${t}</button></div>`).join('')}</div>
  <div class="slots"><div><select aria-label="Input"><option>${input}</option></select></div><div><select class="port" aria-label="Output"><option>WdwndsSbmx</option></select></div><div class="num"><span>-4.1</span><span>P</span><span>P</span></div></div>
  <svg class="mini" width="8" height="36"></svg></div>`).join('');
document.querySelectorAll('.mini').forEach((m, n) => {
  rect(m, 0, 0, 8, 38, '#ddd');
  for (let y = 1; y < 36; y += n ? 5 : 2) rect(m, 0, y, n ? 5 : 6, n ? 3 : 1, '#222');
});

/* edit window timeline */
const BAR = 94.5, BAR12 = 43.3, INK = '#5a41b8';
const ru = $('rulers'), la = $('lanes');
const at = b => BAR12 + (b - 12) * BAR;
const patterns = [
  { low: 35, mid: 27.500, hi: [25.500, 24, 25.500, 26] },
  { low: 36, mid: 28.500, hi: [26, 25.500, 26, 27] },
  { low: 32, mid: 24, hi: [22.500, 21, 22.500, 23] },
  { low: 30.500, mid: 25, hi: [23, 22.500, 23, 24] }
];
const held = [[16, 17, 33], [16, 17, 35], [16, 17, 42], [17, 18, 33.500], [17, 18, 36], [17, 18, 43], [18, 19, 39.500], [18.500, 19, 27.500], [19, 20, 28.500], [19, 20, 32], [19, 20, 39.500], [19, 20, 43], [19.500, 19.750, 27], [19.750, 20, 26]];

function drawArrange() {
  const w = ru.clientWidth, edge = w - 10;
  rect(ru, 0, 0, w, 10, '#707a88');
  rect(ru, 0, 10, w, 12, '#434344');
  rect(ru, 0, 22, w, 11, '#93ad5e');
  rect(ru, 0, 32, w, 2, '#55583f');
  rect(ru, 0, 34, w, 9, '#979798');
  rect(ru, edge, 0, 10, 22, '#3c3c3d');
  for (let x = BAR12, n = 12; x < edge - 8; x += BAR, n++) {
    rect(ru, x, 0, 1, 10, '#333');
    rect(ru, x + BAR / 2, 0, 1, 10, '#444');
    add(ru, 'text', { x: x + 2, y: 7 }, n);
  }
  for (let x = 10, s = 34; x < edge - 6; x += 29.5, s++)
    add(ru, 'text', { x, y: 18, class: 'dim' }, Math.floor(s / 60) + ':' + String(s % 60).padStart(2, '0'));
  add(ru, 'path', { d: `M${edge - 6} 2v6l4-3z`, fill: '#e01010', stroke: '#400', 'stroke-width': .5 });
  add(ru, 'path', { d: `M${edge + 2} 2h6M${edge + 5} 3v6M${edge + 3} 6l2-2 2 2`, stroke: '#ddd', fill: 'none' });

  rect(la, 0, 0, w, 88, '#b5b5b6');
  rect(la, 0, 0, w, 11, '#9c9c9d');
  rect(la, 0, 0, w, 1, '#5c5c5d');
  for (let i = -1, x; (x = BAR12 + i * BAR / 4) < w; i++)
    rect(la, x, 1, 1, 86, i % 4 ? '#000' : '#6f9db5', i % 4 ? { opacity: .1 } : {});
  rect(la, 0, 11, w, 1, '#33333a');
  rect(la, 0, 12, w, 36, '#a99ce4', { opacity: .88 });
  rect(la, 0, 47, w, 2, '#3d3d48');
  rect(la, 0, 86, w, 2, '#8a8a8a');
  const seg = (x, y, len) => rect(la, x, y, len, 1.2, INK);
  [19, 22, 23.500, 27].forEach(y => seg(0, y, 42));
  patterns.forEach((p, b) => {
    for (let q = 0; q < 4; q++) {
      const x = BAR12 + b * BAR + q * BAR / 4;
      seg(x, p.low, 10);
      seg(x + 5, p.mid, 11);
      seg(x + 17, p.mid, 11);
      seg(x + 12, p.hi[q], 11);
    }
  });
  held.forEach(([a, z, y]) => seg(at(a), y, (z - a) * BAR - 1));
  rect(la, at(18), 29, BAR - 1, 4, '#7862cc');
  [12, 16].forEach(b => rect(la, at(b), 12, 1, 36, '#222'));
}

/* piano roll */
const BEAT = 51.48, FIRST = 18.3, ROW = 118 / 12, C4 = 28;
const bt = $('beats'), nv = $('notesview'), ky = $('keys'), ve = $('velocity');
const black = [1, 3, 6, 8, 10];
const pitchClass = n => ((n % 12) + 12) % 12;
const rowTop = n => C4 - (n + 1) * ROW;
const looks = {
  a: { fill: '#8d7dd2', stroke: '#a095dc' }, l: { fill: '#a193dc', stroke: '#7f6cc8' }, m: { fill: '#7b68c8', stroke: '#8f80d2' },
  d: { fill: '#6a55c0', stroke: '#7d6bc8' }, s: { fill: '#d3cbef', stroke: '#181230', 'stroke-width': 1.5 }
};
/* first beat, last beat (from 18|1), centre line, look */
const score = [
  [0, 4, 141, 'a'], [2, 4, 102, 'l'], [4, 8, 121.500, 'a'], [6, 7, 102, 'm'], [7, 8, 82.500, 'm'], [8, 11, 72.500, 's'],
  [11, 11.500, 82.500, 'd'], [11.500, 12, 102, 'd'], [12, 15, 82.500, 'd'], [15, 16, 121.500, 'd'], [16, 60, 33.500, 'd'], [16, 60, 151.500, 'a'],
  [0, 4, 170.500, 'l'], [4, 8, 170.500, 'm'], [12, 16, 200.500, 'l'], [-2, 0, 200.500, 'l'], [-2, 0, 240, 'a'],
  [8, 12, 191, 's'], [12, 16, 240, 'a'], [8, 12, 240, 's'], [16, 60, 249.500, 'a'], [0, 4, 289, 'l'], [4, 8, 289, 'm'], [8, 12, 308.500, 's'],
  [-2, 0, 358, 'a'], [4, 8, 358, 'a'], [12, 16, 358, 'a'], [16, 60, 368, 'l']
];
const stems = [[20, 15, 19], [123, 16], [226, 15], [329, 13], [380, 13], [432, 12], [586, 11], [612, 11], [638, 11, 15, 18], [792, 12], [844, 13, 17]];

function drawRoll() {
  const w = bt.clientWidth;
  rect(bt, 0, 0, w, 11, '#6c7683');
  for (let i = 0, x; (x = FIRST + i * BEAT) < w - 16; i++) {
    rect(bt, x, 0, 1, 11, i ? '#3a3f47' : '#c02020');
    add(bt, 'text', { x: x + 2, y: 7 }, (18 + Math.floor(i / 4)) + '|' + (i % 4 + 1));
  }
  add(bt, 'path', { d: 'M427 0h5v5h3l-5.500 6-5.500-6h3z', fill: '#f02a10', stroke: '#600', 'stroke-width': .8 });
  for (let n = -42; n < 4; n++) {
    if (black.includes(pitchClass(n))) rect(nv, 0, rowTop(n), w, ROW, '#a5a2af');
    else rect(nv, 0, rowTop(n), w, .6, '#aaaaad');
  }
  for (let i = -3, x; (x = FIRST + i * BEAT / 8) < w; i++) {
    const opacity = i % 32 === 0 ? .9 : i % 8 === 0 ? .6 : .14;
    [nv, ve].forEach(s => rect(s, x, 0, 1, 423, i % 8 ? '#3f5060' : '#6699b3', { opacity }));
  }
  score.forEach(([a, z, y, k]) => add(nv, 'rect', { x: FIRST + a * BEAT + .5, y: y - 4, width: (z - a) * BEAT - 1, height: 8, ...looks[k] }));
  stems.forEach(([x, ...ys]) => {
    rect(ve, x, ys[0], 1, 25 - ys[0], '#4a34c0');
    const open = x === 432;
    ys.forEach(y => add(ve, 'circle', { cx: x + .5, cy: y, r: 1.9, fill: open ? '#ddd' : '#1a0ca0', stroke: open ? '#222' : 'none' }));
  });
}

function drawKeys() {
  for (let n = -42; n < 4; n++) {
    const pc = pitchClass(n), y = rowTop(n);
    if (n === -3) rect(ky, 0, y - ROW / 2, 59, ROW * 2, '#9b8fca');
    if (pc === 0 || pc === 5) rect(ky, 0, y + ROW - .5, 59, 1, '#555');
  }
  for (let n = -42; n < 4; n++) {
    const y = rowTop(n);
    if (!black.includes(pitchClass(n))) continue;
    rect(ky, 38, y + ROW / 2 - .5, 21, 1, '#666');
    rect(ky, 0, y + .5, 38.5, 9, '#555', { stroke: '#111' });
  }
  for (let o = 4; o > 0; o--) add(ky, 'text', { x: 54, y: C4 + (4 - o) * 118 - 1, class: 'oct' }, o);
  rect(ky, 58, 0, 1, 423, '#666');
}

function draw() {
  [ru, la, bt, nv, ve].forEach(s => s.replaceChildren());
  drawArrange();
  drawRoll();
}
drawKeys();
draw();
addEventListener('resize', draw);
```
